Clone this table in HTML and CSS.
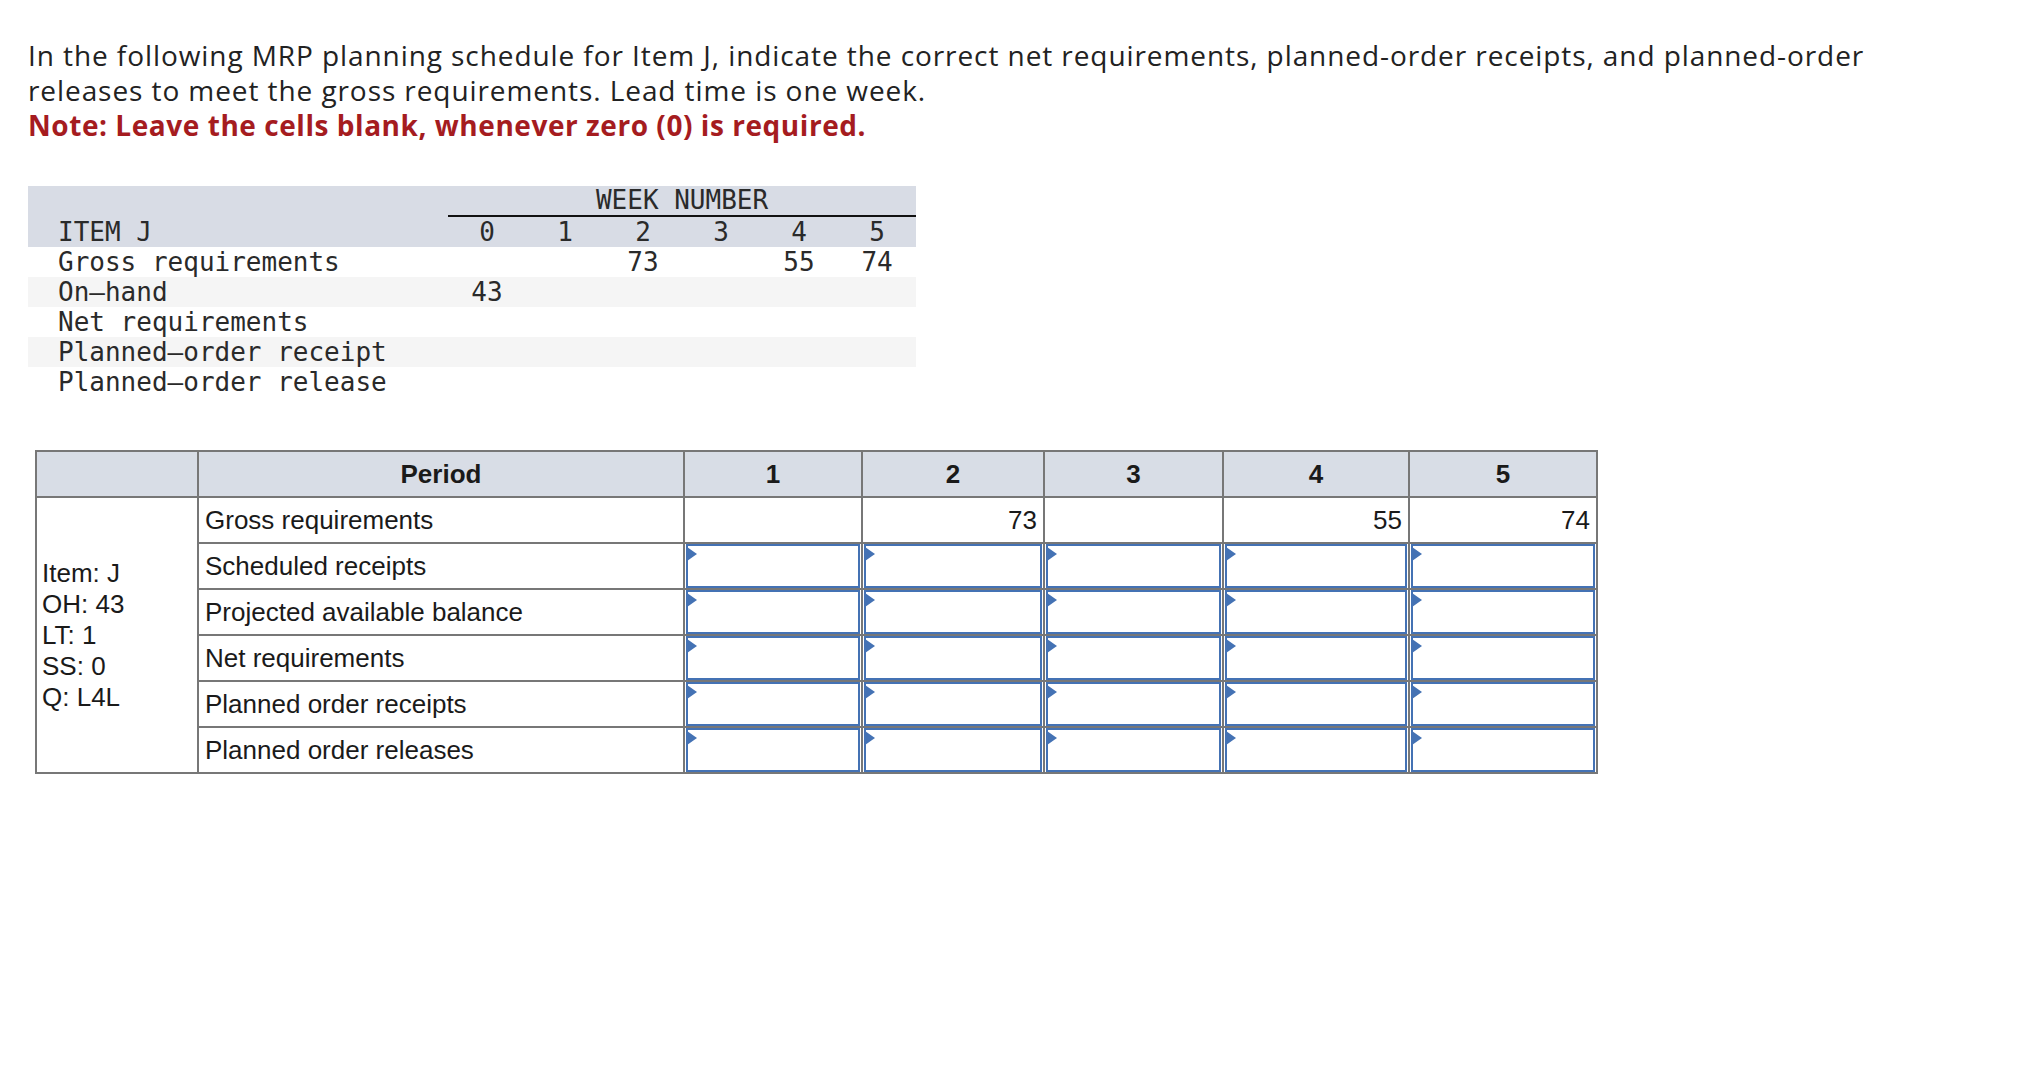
FILE: index.html
```html
<!DOCTYPE html>
<html lang="en">
<head>
<meta charset="utf-8">
<title>MRP planning schedule</title>
<link rel="stylesheet" href="styles.css">
</head>
<body>
<div class="page">
  <p class="prompt">In the following MRP planning schedule for Item J, indicate the correct net requirements, planned-order receipts, and planned-order releases to meet the gross requirements. Lead time is one week.<br><strong class="note">Note: Leave the cells blank, whenever zero (0) is required.</strong></p>

  <table class="given">
    <colgroup>
      <col class="g-label"><col class="g-wk"><col class="g-wk"><col class="g-wk"><col class="g-wk"><col class="g-wk"><col class="g-wk">
    </colgroup>
    <thead>
      <tr class="g-head">
        <th></th>
        <th colspan="6" class="g-weeks">WEEK NUMBER</th>
      </tr>
      <tr class="g-head">
        <th class="g-name">ITEM J</th>
        <th>0</th><th>1</th><th>2</th><th>3</th><th>4</th><th>5</th>
      </tr>
    </thead>
    <tbody>
      <tr><td class="g-name">Gross requirements</td><td></td><td></td><td>73</td><td></td><td>55</td><td>74</td></tr>
      <tr class="g-alt"><td class="g-name">On&#8211;hand</td><td>43</td><td></td><td></td><td></td><td></td><td></td></tr>
      <tr><td class="g-name">Net requirements</td><td></td><td></td><td></td><td></td><td></td><td></td></tr>
      <tr class="g-alt"><td class="g-name">Planned&#8211;order receipt</td><td></td><td></td><td></td><td></td><td></td><td></td></tr>
      <tr><td class="g-name">Planned&#8211;order release</td><td></td><td></td><td></td><td></td><td></td><td></td></tr>
    </tbody>
  </table>

  <table class="mrp">
    <colgroup>
      <col class="c-item"><col class="c-label"><col class="c-p1"><col class="c-p2"><col class="c-p3"><col class="c-p4"><col class="c-p5">
    </colgroup>
    <thead>
      <tr>
        <th></th><th>Period</th><th>1</th><th>2</th><th>3</th><th>4</th><th>5</th>
      </tr>
    </thead>
    <tbody>
      <tr>
        <td rowspan="6" class="item">Item: J<br>OH: 43<br>LT: 1<br>SS: 0<br>Q: L4L</td>
        <td class="label">Gross requirements</td>
        <td class="val"></td><td class="val">73</td><td class="val"></td><td class="val">55</td><td class="val">74</td>
      </tr>
      <tr>
        <td class="label">Scheduled receipts</td>
        <td class="inp"><span class="field"><input type="text" aria-label="Scheduled receipts period 1"></span></td>
        <td class="inp"><span class="field"><input type="text" aria-label="Scheduled receipts period 2"></span></td>
        <td class="inp"><span class="field"><input type="text" aria-label="Scheduled receipts period 3"></span></td>
        <td class="inp"><span class="field"><input type="text" aria-label="Scheduled receipts period 4"></span></td>
        <td class="inp"><span class="field"><input type="text" aria-label="Scheduled receipts period 5"></span></td>
      </tr>
      <tr>
        <td class="label">Projected available balance</td>
        <td class="inp"><span class="field"><input type="text" aria-label="Projected available balance period 1"></span></td>
        <td class="inp"><span class="field"><input type="text" aria-label="Projected available balance period 2"></span></td>
        <td class="inp"><span class="field"><input type="text" aria-label="Projected available balance period 3"></span></td>
        <td class="inp"><span class="field"><input type="text" aria-label="Projected available balance period 4"></span></td>
        <td class="inp"><span class="field"><input type="text" aria-label="Projected available balance period 5"></span></td>
      </tr>
      <tr>
        <td class="label">Net requirements</td>
        <td class="inp"><span class="field"><input type="text" aria-label="Net requirements period 1"></span></td>
        <td class="inp"><span class="field"><input type="text" aria-label="Net requirements period 2"></span></td>
        <td class="inp"><span class="field"><input type="text" aria-label="Net requirements period 3"></span></td>
        <td class="inp"><span class="field"><input type="text" aria-label="Net requirements period 4"></span></td>
        <td class="inp"><span class="field"><input type="text" aria-label="Net requirements period 5"></span></td>
      </tr>
      <tr>
        <td class="label">Planned order receipts</td>
        <td class="inp"><span class="field"><input type="text" aria-label="Planned order receipts period 1"></span></td>
        <td class="inp"><span class="field"><input type="text" aria-label="Planned order receipts period 2"></span></td>
        <td class="inp"><span class="field"><input type="text" aria-label="Planned order receipts period 3"></span></td>
        <td class="inp"><span class="field"><input type="text" aria-label="Planned order receipts period 4"></span></td>
        <td class="inp"><span class="field"><input type="text" aria-label="Planned order receipts period 5"></span></td>
      </tr>
      <tr>
        <td class="label">Planned order releases</td>
        <td class="inp"><span class="field"><input type="text" aria-label="Planned order releases period 1"></span></td>
        <td class="inp"><span class="field"><input type="text" aria-label="Planned order releases period 2"></span></td>
        <td class="inp"><span class="field"><input type="text" aria-label="Planned order releases period 3"></span></td>
        <td class="inp"><span class="field"><input type="text" aria-label="Planned order releases period 4"></span></td>
        <td class="inp"><span class="field"><input type="text" aria-label="Planned order releases period 5"></span></td>
      </tr>
    </tbody>
  </table>
</div>
</body>
</html>
```

FILE: styles.css
```css
html, body {
  margin: 0;
  padding: 0;
  background: #ffffff;
}

.page {
  padding: 38px 0 0 28px;
}

.prompt {
  margin: 0;
  width: 1900px;
  font-family: "Open Sans", "Liberation Sans", sans-serif;
  font-size: 28px;
  letter-spacing: 0.92px;
  line-height: 35px;
  color: #222222;
}

.note {
  color: #a51c1f;
  font-weight: 700;
  letter-spacing: 0.55px;
}

/* given data table (monospace) */
.given {
  margin-top: 43px;
  border-collapse: collapse;
  border-spacing: 0;
  table-layout: fixed;
  width: 888px;
  font-family: "DejaVu Sans Mono", "Liberation Mono", monospace;
  font-size: 26px;
  color: #2a2a2a;
}

.g-label { width: 420px; }
.g-wk { width: 78px; }

.given th,
.given td {
  padding: 0;
  height: 30px;
  line-height: 30px;
  font-weight: 400;
  text-align: center;
  white-space: pre;
}

.g-head {
  background: #d8dce5;
}

.given th.g-weeks {
  height: 29px;
  line-height: 29px;
  border-bottom: 2px solid #111111;
}

.given .g-name {
  text-align: left;
  padding-left: 30px;
}

.g-alt {
  background: #f5f5f5;
}

/* answer table */
.mrp {
  margin: 53px 0 0 7px;
  border-collapse: collapse;
  table-layout: fixed;
  width: 1561px;
  font-family: "Liberation Sans", Arial, sans-serif;
  font-size: 26px;
  color: #1a1a1a;
}

.c-item { width: 162px; }
.c-label { width: 486px; }
.c-p1 { width: 178px; }
.c-p2 { width: 182px; }
.c-p3 { width: 179px; }
.c-p4 { width: 186px; }
.c-p5 { width: 188px; }

.mrp th,
.mrp td {
  border: 2px solid #777777;
  height: 44px;
  padding: 0 6px;
  line-height: 30px;
}

.mrp th {
  background: #d8dde6;
  font-weight: 700;
  text-align: center;
}

.mrp td.item {
  vertical-align: middle;
  line-height: 31px;
  padding-left: 5px;
}

.mrp td.label {
  text-align: left;
}

.mrp td.val {
  text-align: right;
  padding-right: 6px;
}

.mrp td.inp {
  padding: 0 1px;
}

.field {
  position: relative;
  display: block;
}

.field::before {
  content: "";
  position: absolute;
  left: 1px;
  top: 3px;
  width: 0;
  height: 0;
  border-top: 7px solid transparent;
  border-bottom: 7px solid transparent;
  border-left: 10px solid #4472b4;
}

.field input {
  display: block;
  box-sizing: border-box;
  width: 100%;
  height: 44px;
  margin: 0;
  padding: 0 6px;
  border: 2px solid #4472b4;
  border-radius: 0;
  background: #ffffff;
  font-family: "Liberation Sans", Arial, sans-serif;
  font-size: 26px;
  text-align: right;
  outline: none;
}
```
